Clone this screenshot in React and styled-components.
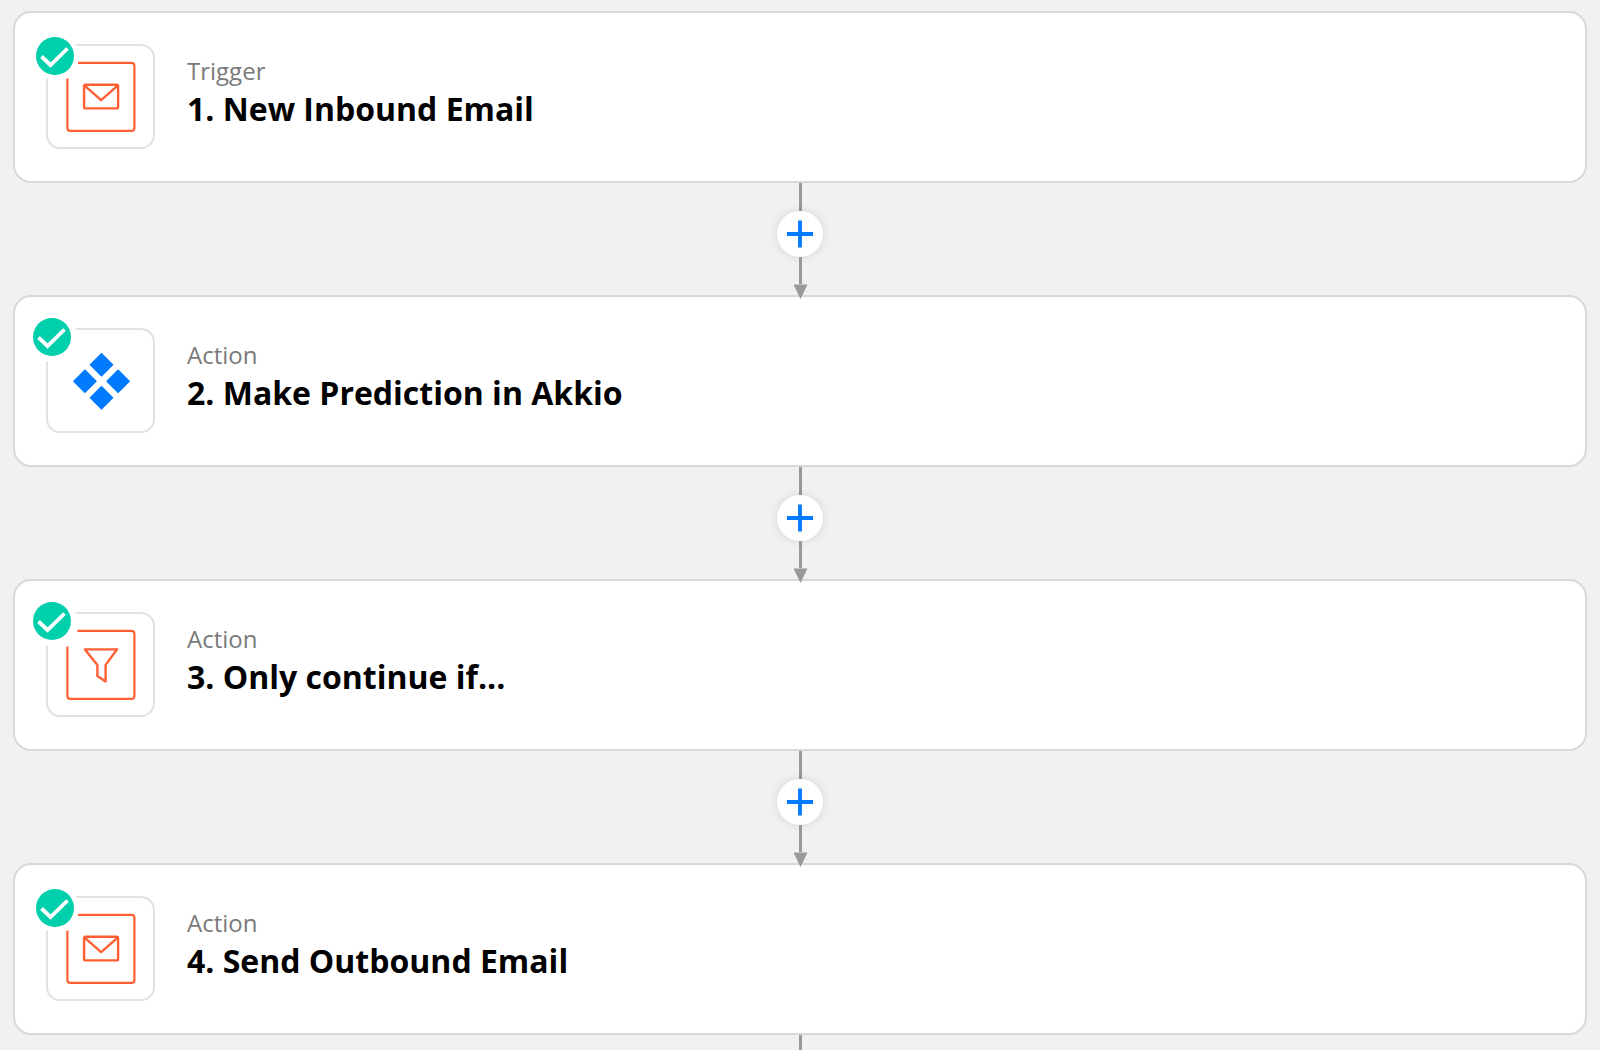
import React from 'react';
import styled, { createGlobalStyle } from 'styled-components';

const palette = {
  page: '#f1f1f1',
  border: '#d9d9d9',
  tileBorder: '#e2e2e2',
  gray: '#7a7a7a',
  line: '#999999',
  blue: '#007bff',
  orange: '#ff5f33',
  green: '#00cfac',
};

const GlobalStyle = createGlobalStyle`
  * {
    box-sizing: border-box;
  }
  body {
    margin: 0;
    background: ${palette.page};
    font-family: 'Open Sans', 'Noto Sans', sans-serif;
  }
`;

const EditorBlock = styled.main`
  display: flex;
  flex-direction: column;
  min-height: 100vh;
  padding: 11px 13px 0;
`;

const StepBlock = styled.section`
  display: flex;
  align-items: flex-start;
  gap: 32px;
  min-height: 172px;
  padding: 31px;
  background: white;
  border: 2px solid ${palette.border};
  border-radius: 18px;
`;

const AppTile = styled.div`
  position: relative;
  display: flex;
  align-items: center;
  justify-content: center;
  flex-shrink: 0;
  width: 109px;
  height: 105px;
  border: 2px solid ${palette.tileBorder};
  border-radius: 14px;
`;

/* white ring cuts into the corner of the tile */
const StatusBadge = styled.span`
  position: absolute;
  top: ${({ $far }) => ($far ? '-18px' : '-14px')};
  left: ${({ $far }) => ($far ? '-21px' : '-17px')};
  padding: ${({ $far }) => ($far ? '6px' : '5px')};
  border-radius: 50%;
  background: white;

  svg {
    display: block;
  }
`;

const StepText = styled.div`
  padding-top: 10px;
`;

const StepKind = styled.p`
  margin: 0;
  font-size: 24px;
  line-height: 34px;
  color: ${palette.gray};
`;

const StepTitle = styled.h2`
  margin: 0;
  font-size: 32px;
  line-height: 41px;
  font-weight: 700;
  color: black;
`;

const ConnectorBlock = styled.div`
  display: flex;
  flex-direction: column;
  align-items: center;
  height: 112px;
`;

const Line = styled.div`
  flex: 1;
  width: 3px;
  background: ${palette.line};
`;

const Tail = styled(Line)`
  align-self: center;
`;

const AddButton = styled.button`
  display: flex;
  align-items: center;
  justify-content: center;
  width: 46px;
  height: 46px;
  padding: 0;
  border: none;
  border-radius: 50%;
  background: white;
  box-shadow: 0 0 10px rgba(0, 0, 0, 0.12);
  cursor: pointer;
`;

/* the tip lies over the top border of the next step */
const ArrowHead = styled.svg`
  position: relative;
  display: block;
  margin-bottom: -4px;
`;

const OutlineIcon = ({ children }) => (
  <svg width="71" height="71" viewBox="-0.4 -0.4 71 71" fill="none" stroke={palette.orange} strokeLinejoin="round">
    <path d="M12 1.5H66Q69 1.5 69 4.5V66.5Q69 69.5 66 69.5H5Q2 69.5 2 66.5V17" strokeWidth="2.2" />
    {children}
  </svg>
);

const MailIcon = () => (
  <OutlineIcon>
    <rect x="18.7" y="23.4" width="34" height="23.6" rx="1.5" strokeWidth="2.4" />
    <path d="M19.5 24.5L35.7 38.8L52 24.5" strokeWidth="2.4" />
  </OutlineIcon>
);

const FilterIcon = () => (
  <OutlineIcon>
    <path d="M19.5 20H51.7L40.2 35.5V52L32 46.5V35.5Z" strokeWidth="2.4" />
  </OutlineIcon>
);

const AkkioIcon = () => (
  <svg width="71" height="71" viewBox="-0.8 -0.8 71 71" fill={palette.blue} stroke={palette.blue} strokeLinejoin="round">
    {[[35.7, 19], [19.1, 35.5], [52.3, 35.5], [35.7, 52]].map(([x, y]) => (
      <path key={`${x}-${y}`} d={`M${x} ${y - 11}l11 11l-11 11l-11 -11z`} strokeWidth="1.6" />
    ))}
  </svg>
);

const CheckIcon = () => (
  <svg width="38" height="38" viewBox="0 0 38 38" fill="none">
    <circle cx="19" cy="19" r="19" fill={palette.green} />
    <path d="M5.5 19.5L14.5 28L31.5 11.5" stroke="white" strokeWidth="3.8" />
  </svg>
);

const icons = {
  mail: MailIcon,
  filter: FilterIcon,
  akkio: AkkioIcon,
};

const steps = [
  { id: 1, kind: 'Trigger', title: 'New Inbound Email', icon: 'mail' },
  { id: 2, kind: 'Action', title: 'Make Prediction in Akkio', icon: 'akkio', far: true },
  { id: 3, kind: 'Action', title: 'Only continue if...', icon: 'filter', far: true },
  { id: 4, kind: 'Action', title: 'Send Outbound Email', icon: 'mail' },
];

const Step = ({ step }) => {
  const { id, kind, title, icon, far } = step;
  const Icon = icons[icon];
  return (
    <StepBlock>
      <AppTile>
        <Icon />
        <StatusBadge $far={far}>
          <CheckIcon />
        </StatusBadge>
      </AppTile>
      <StepText>
        <StepKind>{kind}</StepKind>
        <StepTitle>
          {`${id}. ${title}`}
        </StepTitle>
      </StepText>
    </StepBlock>
  );
};

const Connector = () => (
  <ConnectorBlock>
    <Line />
    <AddButton type="button" aria-label="Add step">
      <svg width="28" height="28" viewBox="0 0 28 28" stroke={palette.blue} strokeWidth="3.8">
        <path d="M14 0.5V27.5M1 14H27" />
      </svg>
    </AddButton>
    <Line />
    <ArrowHead width="15" height="15" viewBox="0 0 15 15" fill={palette.line}>
      <path d="M0.5 0.5H14.5L7.5 15Z" />
    </ArrowHead>
  </ConnectorBlock>
);

const App = () => {
  return (
    <>
      <GlobalStyle />
      <EditorBlock>
        {steps.map((step, index) => (
          <React.Fragment key={step.id}>
            <Step step={step} />
            {/* 마지막 단계 뒤에는 선만 이어짐 */}
            {index < steps.length - 1 ? <Connector /> : <Tail />}
          </React.Fragment>
        ))}
      </EditorBlock>
    </>
  );
};

export default App;
